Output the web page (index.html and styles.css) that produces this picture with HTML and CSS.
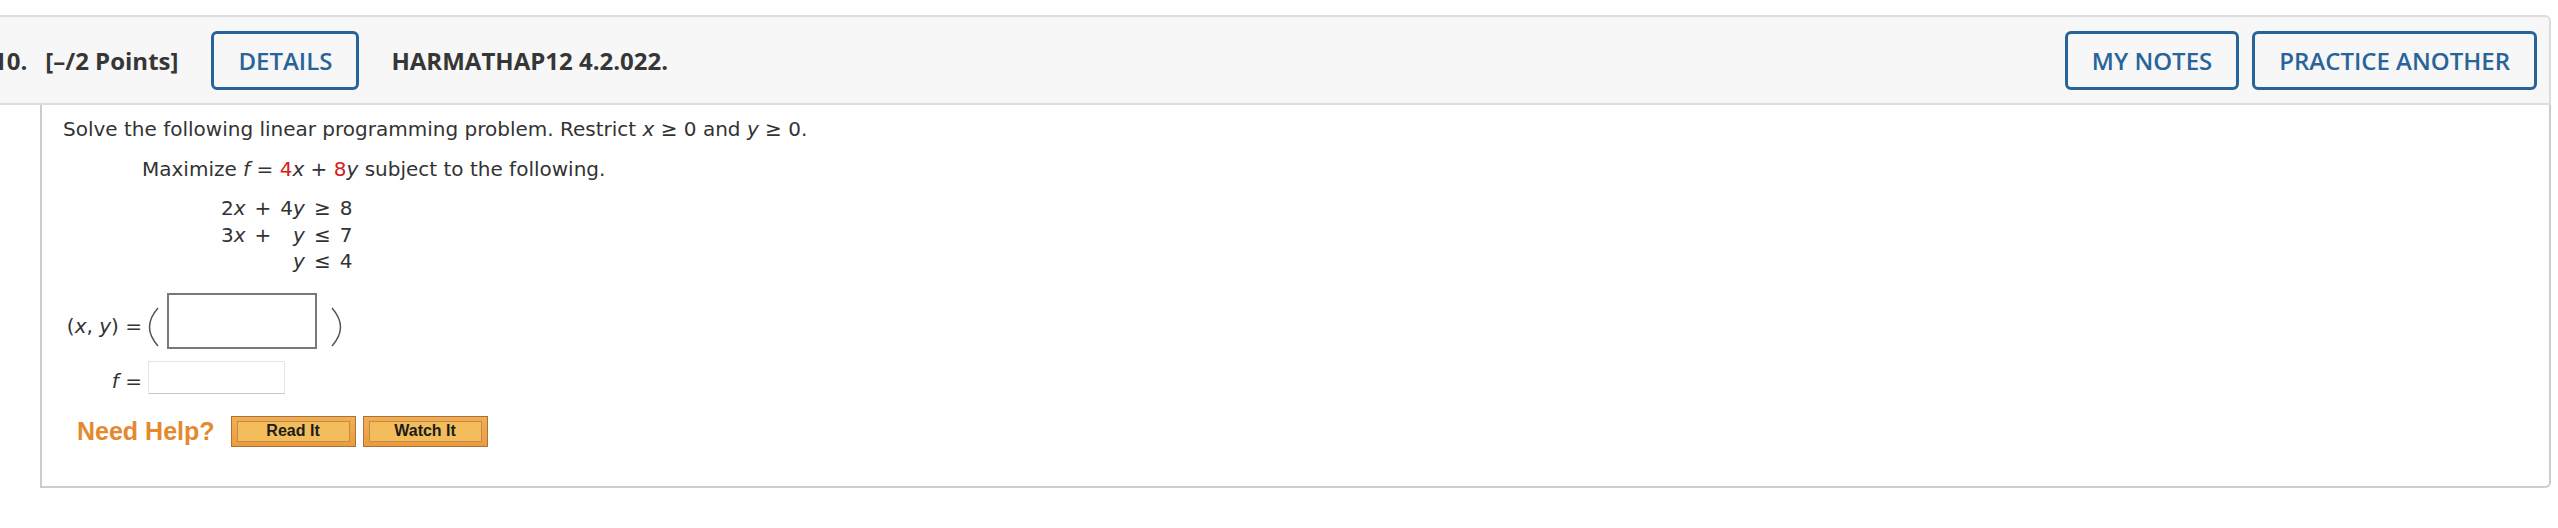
FILE: index.html
```html
<!DOCTYPE html>
<html lang="en">
<head>
<meta charset="utf-8">
<title>Question 10</title>
<link rel="stylesheet" href="styles.css">
</head>
<body>
<div class="question">
  <div class="q-header">
    <span class="q-num">10.</span>
    <span class="q-points">[–/2 Points]</span>
    <button class="btn-outline btn-details">DETAILS</button>
    <span class="q-title">HARMATHAP12 4.2.022.</span>
    <span class="spacer"></span>
    <button class="btn-outline">MY NOTES</button>
    <button class="btn-outline">PRACTICE ANOTHER</button>
  </div>
  <div class="q-body">
    <p class="line intro">Solve the following linear programming problem. Restrict <i>x</i> ≥ 0 and <i>y</i> ≥ 0.</p>
    <div class="indent">
      <p class="line maximize">Maximize <i>f</i> = <span class="red">4</span><i>x</i> + <span class="red">8</span><i>y</i> subject to the following.</p>
      <div class="indent">
        <div class="constraints">
          <span>2<i>x</i></span><span>+</span><span>4<i>y</i></span><span>≥</span><span>8</span>
          <span>3<i>x</i></span><span>+</span><span><i>y</i></span><span>≤</span><span>7</span>
          <span></span><span></span><span><i>y</i></span><span>≤</span><span>4</span>
        </div>
      </div>
    </div>
    <div class="answer-row xy-row">
      <span class="ans-label">(<i>x</i>, <i>y</i>) =</span>
      <svg class="paren" width="11" height="40" viewBox="0 0 11 40"><path d="M10 1 C 3 9, 1.5 16, 1.5 20 C 1.5 24, 3 31, 10 39" fill="none" stroke="#555" stroke-width="1.5"/></svg>
      <input class="box-input" type="text">
      <svg class="paren paren-r" width="11" height="40" viewBox="0 0 11 40"><path d="M1 1 C 8 9, 9.5 16, 9.5 20 C 9.5 24, 8 31, 1 39" fill="none" stroke="#555" stroke-width="1.5"/></svg>
    </div>
    <div class="answer-row f-row">
      <span class="ans-label"><i>f</i> =</span>
      <input class="plain-input" type="text">
    </div>
    <div class="help-row">
      <span class="need-help">Need Help?</span>
      <button class="help-btn"><span>Read It</span></button>
      <button class="help-btn"><span>Watch It</span></button>
    </div>
  </div>
</div>
</body>
</html>
```

FILE: styles.css
```css
html, body {
  margin: 0;
  padding: 0;
  background: #ffffff;
}

body {
  padding-top: 15px;
  font-family: "DejaVu Sans", Verdana, sans-serif;
  color: #333333;
}

.question {
  margin-left: -27px;
  margin-right: 7px;
}

.q-header {
  display: flex;
  align-items: center;
  height: 86px;
  padding-left: 18px;
  padding-right: 12px;
  background: #f7f7f7;
  border: 2px solid #dddddd;
  border-top-right-radius: 6px;
  font-family: "Open Sans", sans-serif;
  font-weight: 700;
  font-size: 24px;
  color: #363636;
}

.q-num {
  margin-right: 18px;
}

.q-points {
  margin-right: 33px;
}

.spacer {
  flex: 1;
}

.btn-outline {
  box-sizing: border-box;
  height: 59px;
  padding: 0 24px;
  margin-left: 13px;
  background: transparent;
  border: 3px solid #28649a;
  border-radius: 6px;
  color: #28649a;
  font-family: "Open Sans", sans-serif;
  font-weight: 600;
  font-size: 24px;
}

.btn-details {
  margin-left: 0;
  margin-right: 32px;
}

.q-body {
  margin-left: 67px;
  padding: 11px 21px 39px;
  border: 2px solid #cccccc;
  border-top: none;
  border-bottom-right-radius: 6px;
  font-size: 20px;
  line-height: 26px;
}

.line {
  margin: 0;
}

.maximize {
  margin-top: 14px;
}

.indent {
  padding-left: 79px;
}

.red {
  color: #d32020;
}

.constraints {
  display: inline-grid;
  grid-template-columns: repeat(5, auto);
  column-gap: 9px;
  justify-items: end;
  margin-top: 13px;
  line-height: 26.5px;
}

.answer-row {
  display: flex;
  align-items: flex-end;
}

.xy-row {
  margin-top: 18px;
}

.ans-label {
  box-sizing: border-box;
  width: 79px;
  text-align: right;
  margin-right: 6px;
  white-space: nowrap;
}

.xy-row .ans-label {
  margin-bottom: 10px;
}

.paren {
  display: block;
  margin-bottom: 2px;
}

.box-input {
  box-sizing: border-box;
  width: 150px;
  height: 56px;
  margin: 0 0 0 8px;
  border: 2px solid #787878;
  background: #ffffff;
}

.paren-r {
  margin-left: 14px;
}

.f-row {
  margin-top: 12px;
}

.plain-input {
  box-sizing: border-box;
  width: 137px;
  height: 33px;
  margin: 0;
  border: 1px solid #e4e4e4;
  border-bottom-color: #c9c9c9;
  background: #ffffff;
}

.help-row {
  display: flex;
  align-items: center;
  margin-top: 22px;
  padding-left: 14px;
}

.need-help {
  font-family: "Liberation Sans", Arial, sans-serif;
  font-weight: 700;
  font-size: 25px;
  color: #e5882e;
  margin-right: 16px;
  line-height: 31px;
}

.help-btn {
  box-sizing: border-box;
  height: 31px;
  width: 125px;
  margin: 0 7px 0 0;
  padding: 4px 5px 4px 5px;
  border: 1px solid #a8733a;
  background: linear-gradient(#f3ae52, #ec9c3f);
  display: flex;
}

.help-btn span {
  flex: 1;
  display: flex;
  align-items: center;
  justify-content: center;
  border: 1px solid #c48a4c;
  background: #f3bd5c;
  font-family: "Liberation Sans", Arial, sans-serif;
  font-weight: 700;
  font-size: 16px;
  color: #1c1c1c;
}
```
